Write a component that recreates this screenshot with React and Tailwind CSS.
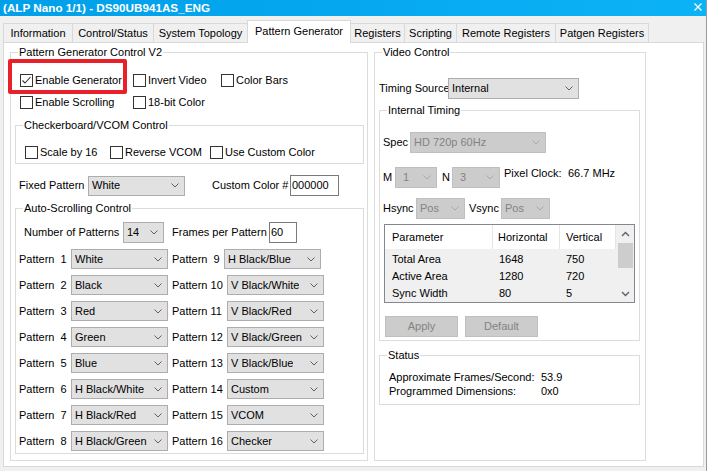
import React from "react";

/* ─── Small win32-ish widgets ───────────────────────────────────────────── */
function Chevron({ disabled }) {
  return (
    <svg width="8" height="5" viewBox="0 0 8 5" className="shrink-0">
      <path d="M0.5 0.5 L4 4 L7.5 0.5" fill="none" stroke={disabled ? "#a8a8a8" : "#606060"} strokeWidth="1" />
    </svg>
  );
}

function Select({ value, className = "", disabled = false }) {
  const tone = disabled
    ? "bg-[#cccccc] border-[#bfbfbf] text-[#838383]"
    : "bg-[#e1e1e1] border-[#adadad] text-black";
  return (
    <div className={`flex items-center justify-between shrink-0 border pl-[3px] pr-[5px] ${tone} ${className}`}>
      <span className="truncate">{value}</span>
      <Chevron disabled={disabled} />
    </div>
  );
}

function Check({ label, checked = false, className = "" }) {
  return (
    <div className={`flex items-center shrink-0 ${className}`}>
      <span className="w-[13px] h-[13px] border border-[#333333] bg-white flex items-center justify-center shrink-0">
        {checked && (
          <svg width="11" height="11" viewBox="0 0 11 11">
            <path d="M1.5 5.5 L4 8 L9.5 2" fill="none" stroke="#333333" strokeWidth="1.1" />
          </svg>
        )}
      </span>
      <span className="ml-[2px]">{label}</span>
    </div>
  );
}

function Group({ title, className = "", children }) {
  return (
    <div className={`border border-[#dcdcdc] ${className}`}>
      <div className="-mt-[7px] ml-[7px] px-[1px] w-fit h-[13px] bg-white leading-[13px]">
        {title}
      </div>
      {children}
    </div>
  );
}

function TextBox({ value, className = "" }) {
  return (
    <div className={`flex items-center shrink-0 border border-[#7a7a7a] bg-white pl-[1px] ${className}`}>
      {value}
    </div>
  );
}

function DisabledButton({ label, className = "" }) {
  return (
    <div className={`flex items-center justify-center border border-[#bfbfbf] bg-[#cccccc] text-[#838383] ${className}`}>
      {label}
    </div>
  );
}

/* ─── Data ──────────────────────────────────────────────────────────────── */
const TABS = [
  { label: "Information", w: "w-[70px]" },
  { label: "Control/Status", w: "w-[82px]" },
  { label: "System Topology", w: "w-[95px]" },
  { label: "Pattern Generator", w: "w-[104px]", active: true },
  { label: "Registers", w: "w-[55px]" },
  { label: "Scripting", w: "w-[53px]" },
  { label: "Remote Registers", w: "w-[100px]" },
  { label: "Patgen Registers", w: "w-[94px]" },
];

const PATTERNS = [
  [["1", "White"], ["9", "H Black/Blue"]],
  [["2", "Black"], ["10", "V Black/White"]],
  [["3", "Red"], ["11", "V Black/Red"]],
  [["4", "Green"], ["12", "V Black/Green"]],
  [["5", "Blue"], ["13", "V Black/Blue"]],
  [["6", "H Black/White"], ["14", "Custom"]],
  [["7", "H Black/Red"], ["15", "VCOM"]],
  [["8", "H Black/Green"], ["16", "Checker"]],
];

const TIMING = [
  ["Total Area", "1648", "750"],
  ["Active Area", "1280", "720"],
  ["Sync Width", "80", "5"],
];

const patLabel = (n) => (n.length === 1 ? `Pattern  ${n}` : `Pattern ${n}`);

/* ─── Left: pattern generator control ───────────────────────────────────── */
function PatternControl() {
  return (
    <Group title="Pattern Generator Control V2" className="w-[358px] pb-[6px]">
      <div className="pl-[9px]">
        <div className="flex mt-[15px] h-[13px]">
          <Check label="Enable Generator" checked className="w-[113px]" />
          <Check label="Invert Video" className="w-[88px]" />
          <Check label="Color Bars" />
        </div>
        <div className="flex mt-[9px] h-[13px]">
          <Check label="Enable Scrolling" className="w-[113px]" />
          <Check label="18-bit Color" />
        </div>
      </div>

      <Group title="Checkerboard/VCOM Control" className="mt-[16px] ml-[4px] mr-[3px] pb-[4px]">
        <div className="flex mt-[14px] h-[13px] pl-[9px]">
          <Check label="Scale by 16" className="w-[85px]" />
          <Check label="Reverse VCOM" className="w-[100px]" />
          <Check label="Use Custom Color" />
        </div>
      </Group>

      <div className="flex items-center mt-[11px] h-[21px] pl-[8px]">
        <span className="w-[69px] shrink-0">Fixed Pattern</span>
        <Select value="White" className="w-[97px] h-[20px]" />
        <span className="ml-[27px] w-[78px] shrink-0">Custom Color #</span>
        <TextBox value="000000" className="w-[49px] h-[21px]" />
      </div>

      <Group title="Auto-Scrolling Control" className="mt-[12px] ml-[4px] mr-[3px] pb-[2px]">
        <div className="flex items-center mt-[7px] h-[21px] pl-[8px]">
          <span className="w-[99px] shrink-0">Number of Patterns</span>
          <Select value="14" className="w-[41px] h-[21px]" />
          <span className="ml-[8px] w-[97px] shrink-0">Frames per Pattern</span>
          <TextBox value="60" className="w-[28px] h-[21px]" />
        </div>

        <div className="pl-[3px]">
          {PATTERNS.map(([l, r]) => (
            <div key={l[0]} className="flex items-center mt-[6px] h-[20px]">
              <span className="w-[52px] shrink-0 whitespace-pre">{patLabel(l[0])}</span>
              <Select value={l[1]} className="w-[97px] h-[20px]" />
              <span className={`ml-[4px] shrink-0 whitespace-pre ${r[0] === "9" ? "w-[52px]" : "w-[55px]"}`}>
                {patLabel(r[0])}
              </span>
              <Select value={r[1]} className="w-[97px] h-[20px]" />
            </div>
          ))}
        </div>
      </Group>
    </Group>
  );
}

/* ─── Right: video control ──────────────────────────────────────────────── */
function ScrollArrow({ up }) {
  return (
    <svg width="9" height="6" viewBox="0 0 9 6">
      <path d={up ? "M1 5 L4.5 1.5 L8 5" : "M1 1 L4.5 4.5 L8 1"} fill="none" stroke="#606060" strokeWidth="1.4" />
    </svg>
  );
}

function TimingTable() {
  return (
    <div className="flex mt-[5px] ml-[4px] w-[251px] h-[79px] border border-[#828790] bg-[#f0f0f0]">
      <div className="flex flex-col w-[231px]">
        <div className="flex h-[24px] bg-white items-center">
          <div className="w-[108px] h-full flex items-center pl-[7px] border-r border-[#e5e5e5]">Parameter</div>
          <div className="w-[67px] h-full flex items-center pl-[5px] border-r border-[#e5e5e5]">Horizontal</div>
          <div className="w-[56px] h-full flex items-center pl-[6px] border-r border-[#e5e5e5]">Vertical</div>
        </div>
        <div className="pt-[2px] overflow-hidden">
          {TIMING.map(([p, h, v]) => (
            <div key={p} className="flex h-[17px] items-center">
              <div className="w-[108px] pl-[7px]">{p}</div>
              <div className="w-[67px] pl-[6px]">{h}</div>
              <div className="w-[56px] pl-[6px]">{v}</div>
            </div>
          ))}
        </div>
      </div>
      <div className="w-[18px] flex flex-col items-center">
        <div className="h-[17px] flex items-center justify-center">
          <ScrollArrow up />
        </div>
        <div className="mt-[1px] w-[15px] h-[25px] bg-[#cdcdcd]" />
        <div className="flex-1" />
        <div className="h-[17px] flex items-center justify-center">
          <ScrollArrow />
        </div>
      </div>
    </div>
  );
}

function VideoControl() {
  return (
    <Group title="Video Control" className="ml-[6px] w-[272px]">
      <div className="flex items-center mt-[19px] h-[21px] pl-[4px]">
        <span className="w-[69px] shrink-0">Timing Source</span>
        <Select value="Internal" className="w-[131px] h-[21px]" />
      </div>

      <Group title="Internal Timing" className="mt-[11px] ml-[4px] w-[261px] pb-[3px]">
        <div className="flex items-center mt-[15px] h-[21px] pl-[3px]">
          <span className="w-[27px] shrink-0">Spec</span>
          <Select value="HD 720p 60Hz" disabled className="w-[136px] h-[21px]" />
        </div>

        <div className="flex items-center mt-[14px] h-[21px] pl-[3px]">
          <span className="w-[12px] shrink-0">M</span>
          <Select value="1" disabled className="w-[42px] h-[21px] pl-[7px]" />
          <span className="ml-[5px] w-[10px] shrink-0">N</span>
          <Select value="3" disabled className="w-[48px] h-[21px] pl-[7px]" />
          <span className="ml-[4px] w-[64px] shrink-0 self-start">Pixel Clock:</span>
          <span className="self-start">66.7 MHz</span>
        </div>

        <div className="flex items-center mt-[10px] h-[21px] pl-[3px]">
          <span className="w-[33px] shrink-0">Hsync</span>
          <Select value="Pos" disabled className="w-[49px] h-[21px]" />
          <span className="ml-[4px] w-[32px] shrink-0">Vsync</span>
          <Select value="Pos" disabled className="w-[49px] h-[21px]" />
        </div>

        <TimingTable />

        <div className="flex mt-[13px] ml-[5px]">
          <DisabledButton label="Apply" className="w-[73px] h-[21px]" />
          <DisabledButton label="Default" className="ml-[7px] w-[73px] h-[21px]" />
        </div>
      </Group>

      <Group title="Status" className="mt-[14px] ml-[4px] w-[261px] pb-[6px]">
        <div className="mt-[8px] pl-[9px] leading-[14px]">
          <div className="flex">
            <span className="w-[152px] shrink-0">Approximate Frames/Second:</span>
            <span>53.9</span>
          </div>
          <div className="flex">
            <span className="w-[152px] shrink-0">Programmed Dimensions:</span>
            <span>0x0</span>
          </div>
        </div>
      </Group>
    </Group>
  );
}

/* ─── Window ────────────────────────────────────────────────────────────── */
export default function App() {
  return (
    <div className="relative w-[707px] h-[471px] overflow-hidden bg-[#f0f0f0] border-r border-[#9a9a9a] font-['Liberation_Sans',Arial,sans-serif] text-[11px] leading-[13px] text-black whitespace-nowrap select-none">
      {/* title bar */}
      <div className="flex items-center justify-between h-[16px] pl-[3px] pr-[3px] bg-linear-to-r from-[#009fe9] to-[#0cb2f6] text-white">
        <span className="font-bold text-[11.7px] leading-[14px]">(ALP Nano 1/1) - DS90UB941AS_ENG</span>
        <svg width="8" height="8" viewBox="0 0 8 8" className="mr-[1px] -mt-[2px]">
          <path d="M0.5 0.5 L7.5 7.5 M7.5 0.5 L0.5 7.5" stroke="#ffffff" strokeWidth="1.3" />
        </svg>
      </div>

      {/* tab strip */}
      <div className="flex items-end h-[22px] mt-[4px] pl-[3px]">
        {TABS.map((t, i) => (
          <div
            key={t.label}
            className={`flex items-center justify-center border-t border-l border-r border-[#d9d9d9] ${t.w} ${
              i > 0 ? "-ml-px" : ""
            } ${t.active ? "relative z-10 h-[23px] -mb-px bg-white pb-[2px]" : "h-[19px] bg-[#f0f0f0]"}`}
          >
            {t.label}
          </div>
        ))}
      </div>

      {/* tab page */}
      <div className="ml-[3px] w-[701px] h-[425px] border border-[#d9d9d9] bg-white">
        <div className="flex items-stretch mt-[9px] ml-[6px]">
          <PatternControl />
          <VideoControl />
        </div>
      </div>

      {/* red highlight annotation */}
      <div className="absolute left-[8px] top-[59px] w-[119px] h-[35px] border-[4px] border-[#e8202a] rounded-[2px] pointer-events-none" />
    </div>
  );
}
